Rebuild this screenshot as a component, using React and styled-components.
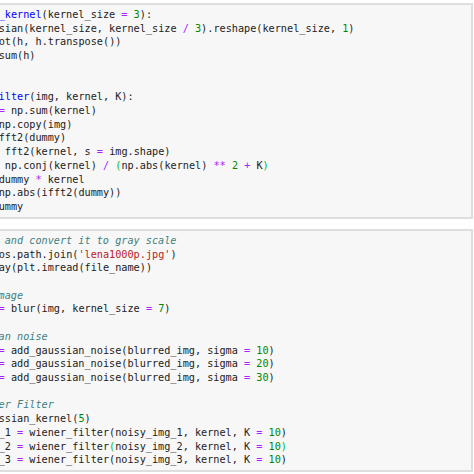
import styled, { createGlobalStyle } from "styled-components";

const Global = createGlobalStyle`
    html, body {
        margin:0;
        padding:0;
        background:#fff;
    }
`
const Page = styled.div`
    width:474px;
    height:474px;
    overflow:hidden;
    padding-top:3px;
    box-sizing:border-box;
    display:flex;
    flex-direction:column;
    gap:10px;
`
const Cell = styled.div`
    margin-left:-100px;
    margin-right:1px;
    border:2px solid #dedede;
    background:#f7f7f7;
    padding:3px 0 3px 23px;
`
const Code = styled.pre`
    margin:0;
    font-family:"DejaVu Sans Mono", "Liberation Mono", monospace;
    font-size:10.2px;
    line-height:13.72px;
    color:#222;
    white-space:pre;
`
const Line = styled.div`
    height:13.72px;
`
const colors = {
    kw: "#008000",
    def: "#0000ff",
    num: "#008800",
    str: "#ba2121",
    com: "#408080",
    op: "#aa22ff",
    match: "#00bb00",
};
const Tok = styled.span`
    color:${(p) => colors[p.$kind] || "inherit"};
    font-weight:${(p) => (p.$kind === "kw" ? 700 : 400)};
    font-style:${(p) => (p.$kind === "com" ? "italic" : "normal")};
`

const cell1 = [
    "def gaussian_kernel(kernel_size = 3):",
    "    h = gaussian(kernel_size, kernel_size / 3).reshape(kernel_size, 1)",
    "    h = np.dot(h, h.transpose())",
    "    h /= np.sum(h)",
    "    return h",
    "",
    "def wiener_filter(img, kernel, K):",
    "    kernel /= np.sum(kernel)",
    "    dummy = np.copy(img)",
    "    dummy = fft2(dummy)",
    "    kernel = fft2(kernel, s = img.shape)",
    "    kernel = np.conj(kernel) / (np.abs(kernel) ** 2 + K)",
    "    dummy = dummy * kernel",
    "    dummy = np.abs(ifft2(dummy))",
    "    return dummy",
];

const cell2 = [
    "# Load image and convert it to gray scale",
    "file_name = os.path.join('lena1000p.jpg')",
    "img = rgb2gray(plt.imread(file_name))",
    "",
    "# Blur the image",
    "blurred_img = blur(img, kernel_size = 7)",
    "",
    "# Add Gaussian noise",
    "noisy_img_1 = add_gaussian_noise(blurred_img, sigma = 10)",
    "noisy_img_2 = add_gaussian_noise(blurred_img, sigma = 20)",
    "noisy_img_3 = add_gaussian_noise(blurred_img, sigma = 30)",
    "",
    "# Apply Wiener Filter",
    "kernel = gaussian_kernel(5)",
    "filtered_img_1 = wiener_filter(noisy_img_1, kernel, K = 10)",
    "filtered_img_2 = wiener_filter(noisy_img_2, kernel, K = 10)",
    "filtered_img_3 = wiener_filter(noisy_img_3, kernel, K = 10)",
];

// matched bracket highlight: [line, column]
const match1 = [[11, 31], [11, 55]];
const match2 = [[15, 30], [15, 58]];

const re = /(#.*$)|('[^']*')|(\*\*|\/=|[=\/*+])|(\b(?:def|return)\b)|([A-Za-z_]\w*)|(\d+)|(\s+)|(.)/g;

function tokenize(line, li, matches) {
    const out = [];
    let afterDef = false;
    let m;
    re.lastIndex = 0;
    while ((m = re.exec(line)) !== null) {
        let kind = "";
        if (m[1]) kind = "com";
        else if (m[2]) kind = "str";
        else if (m[3]) kind = "op";
        else if (m[4]) { kind = "kw"; afterDef = m[4] === "def"; }
        else if (m[5]) { if (afterDef) { kind = "def"; afterDef = false; } }
        else if (m[6]) kind = "num";
        else if (m[8] && matches.some(([l, c]) => l === li && c === m.index)) kind = "match";
        out.push({ text: m[0], kind });
    }
    return out;
}

function Block({ lines, matches }) {
    return (
        <Cell>
            <Code>
                {lines.map((line, i) => (
                    <Line key={i}>
                        {tokenize(line, i, matches).map((t, j) => (
                            <Tok key={j} $kind={t.kind}>{t.text}</Tok>
                        ))}
                    </Line>
                ))}
            </Code>
        </Cell>
    );
}

export default function App() {
    return (
        <>
            <Global />
            <Page>
                <Block lines={cell1} matches={match1} />
                <Block lines={cell2} matches={match2} />
            </Page>
        </>
    );
}
